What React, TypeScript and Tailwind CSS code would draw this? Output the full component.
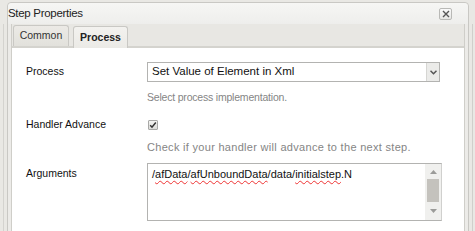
import React from "react";

function Check() {
  return (
    <div className="w-[10px] h-[10px] border border-[#a9a9a7] bg-gradient-to-b from-[#f4f4f2] to-[#dcdcd9] flex items-center justify-center rounded-[1px]">
      <svg width="8" height="8" viewBox="0 0 8 8">
        <path d="M1.2 4.3 L3 6.2 L6.8 1.6" stroke="#333" strokeWidth="1.5" fill="none" />
      </svg>
    </div>
  );
}

export default function App() {
  const wavy = "underline decoration-wavy decoration-[#e33] decoration-1 underline-offset-2";
  return (
    <div
      className="w-[475px] h-[231px] overflow-hidden bg-[#e9e8e4] relative text-[11px] text-[#111]"
      style={{ fontFamily: '"Liberation Sans", Arial, sans-serif' }}
    >
      <div className="absolute left-[3px] top-[24px] bottom-0 w-px bg-[#d4d3cf]" />
      <div className="ml-[7px] mt-[2px] w-[462px] h-[240px] border border-[#c9c8c4] rounded-t-[4px] bg-[#ecebe8] flex flex-col">
        {/* title bar */}
        <div className="h-[21px] flex items-center justify-between bg-gradient-to-b from-[#f6f6f4] to-[#eeeeec] rounded-t-[4px]">
          <span className="text-[11.5px] tracking-[-0.3px] text-[#222] leading-none">Step Properties</span>
          <div className="mr-[16px] w-[13px] h-[12px] border border-[#b9b9b6] rounded-[2px] bg-gradient-to-b from-[#fafafa] to-[#e6e6e4] flex items-center justify-center">
            <svg width="8" height="8" viewBox="0 0 8 8">
              <path d="M1 1 L7 7 M7 1 L1 7" stroke="#555" strokeWidth="1.4" />
            </svg>
          </div>
        </div>
        {/* panel */}
        <div className="mx-[3px] flex-1 border-l border-r border-[#cfcec9] flex flex-col">
          <div className="h-[24px] bg-[#e8e7e3] border-b-2 border-[#d4d3ce] flex items-end pl-[1px] gap-[4px]">
            <div className="w-[56px] h-[21px] border border-b-0 border-[#c9c8c4] rounded-t-[3px] bg-gradient-to-b from-[#eceae6] to-[#e2e1dc] flex items-center justify-center text-[10.5px] text-[#333]">
              Common
            </div>
            <div className="w-[55px] h-[22px] -mb-[2px] border border-b-0 border-[#c9c8c4] rounded-t-[3px] bg-gradient-to-b from-[#f3f2ef] to-[#ebeae6] flex items-center justify-center text-[10.5px] font-bold text-[#222]">
              Process
            </div>
          </div>
          <div className="flex-1 bg-white pl-[14px] text-[10.5px]">
            <div className="mt-[14px] flex items-center h-[20px]">
              <div className="w-[121px]">Process</div>
              <div className="w-[293px] h-[20px] border border-[#b3b3b1] flex items-center">
                <div className="flex-1 pl-[4px] text-[11.5px] text-[#111]">Set Value of Element in Xml</div>
                <div className="w-[13px] h-full bg-[#ebebe9] border-l border-[#d6d6d3] flex items-center justify-center">
                  <svg width="7" height="5" viewBox="0 0 7 5">
                    <path d="M0.5 0.8 L3.5 3.8 L6.5 0.8" stroke="#555" strokeWidth="1.5" fill="none" />
                  </svg>
                </div>
              </div>
            </div>
            <div className="mt-[8px] h-[14px] leading-[14px] pl-[121px] text-[#858585] tracking-[-0.2px]">Select process implementation.</div>
            <div className="mt-[14px] flex items-center h-[14px]">
              <div className="w-[122px]">Handler Advance</div>
              <Check />
            </div>
            <div className="mt-[8px] h-[14px] leading-[14px] pl-[121px] text-[11px] text-[#858585] tracking-[0.3px]">
              Check if your handler will advance to the next step.
            </div>
            <div className="mt-[9px] flex">
              <div className="w-[121px] pt-[3px] leading-[14px]">Arguments</div>
              <div className="w-[295px] h-[58px] border border-[#b3b3b1] border-r-[#d0d0ce] flex">
                <div className="flex-1 pl-[4px] pt-[3px] leading-[14px] text-[11px] text-[#111]">
                  /<span className={wavy}>afData</span>/<span className={wavy}>afUnboundData</span>/data/<span className={wavy}>initialstep</span>.N
                </div>
                <div className="w-[16px] h-full bg-[#f0f0ee] flex flex-col items-center">
                  <svg className="mt-[6px]" width="7" height="4" viewBox="0 0 7 4">
                    <path d="M0 4 L3.5 0 L7 4 Z" fill="#9b9b99" />
                  </svg>
                  <div className="mt-[5px] w-[12px] h-[23px] bg-[#c4c2bd]" />
                  <svg className="mt-[7px]" width="7" height="4" viewBox="0 0 7 4">
                    <path d="M0 0 L3.5 4 L7 0 Z" fill="#9b9b99" />
                  </svg>
                </div>
              </div>
            </div>
          </div>
        </div>
      </div>
      <div className="absolute left-[472px] top-[24px] bottom-0 w-px bg-[#d0cfcb]" />
    </div>
  );
}
